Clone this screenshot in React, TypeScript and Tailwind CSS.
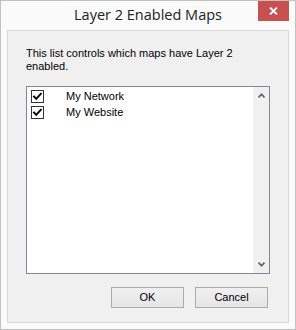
import React from "react";

function Check() {
  return (
    <div className="w-[13px] h-[13px] border border-[#333333] bg-white flex items-center justify-center shrink-0">
      <svg width="11" height="11" viewBox="0 0 11 11">
        <path d="M2 5.5 L4.2 7.8 L8.8 2.8" fill="none" stroke="#000" strokeWidth="1.9" strokeLinecap="square" />
      </svg>
    </div>
  );
}

function Row({ label }: { label: string }) {
  return (
    <div className="h-[16px] flex items-center pl-[4px]">
      <Check />
      <span className="ml-[22px] leading-[16px]">{label}</span>
    </div>
  );
}

export default function App() {
  return (
    <div
      className="w-[296px] h-[330px] border border-[#c2c2c2] bg-[#fafafa] flex flex-col text-[11px] text-black"
      style={{ fontFamily: '"Liberation Sans", Arial, sans-serif' }}
    >
      <div className="relative h-[29px] shrink-0 flex items-center justify-center">
        <span
          className="text-[14.5px] text-[#222] leading-none pb-[1px]"
          style={{ fontFamily: '"Open Sans", "Noto Sans", sans-serif' }}
        >
          Layer 2 Enabled Maps
        </span>
        <div className="absolute right-[6px] top-0 w-[31px] h-[20px] bg-[#c75050] flex items-center justify-center">
          <svg width="9" height="8" viewBox="0 0 9 8">
            <path d="M1 0.5 L8 7.5 M8 0.5 L1 7.5" stroke="#fff" strokeWidth="1.8" />
          </svg>
        </div>
      </div>
      <div className="flex-1 mx-[6px] mb-[6px] border border-[#d9d9d9] bg-[#f0f0f0] flex flex-col px-[18px] pt-[16px] pb-[13px]">
        <p className="leading-[13px]">
          This list controls which maps have Layer 2
          <br />
          enabled.
        </p>
        <div className="mt-[13px] h-[188px] border border-[#828790] bg-white flex">
          <div className="flex-1 pt-[1px]">
            <Row label="My Network" />
            <Row label="My Website" />
          </div>
          <div className="w-[16px] bg-[#f0f0f0] flex flex-col justify-between items-center py-[6px]">
            <svg width="7" height="5" viewBox="0 0 7 5">
              <path d="M0.5 4.5 L3.5 1.2 L6.5 4.5" fill="none" stroke="#606060" strokeWidth="1.6" />
            </svg>
            <svg width="7" height="5" viewBox="0 0 7 5">
              <path d="M0.5 0.5 L3.5 3.8 L6.5 0.5" fill="none" stroke="#606060" strokeWidth="1.6" />
            </svg>
          </div>
        </div>
        <div className="mt-[13px] flex justify-end gap-[11px] pr-[2px]">
          <button className="w-[73px] h-[21px] border border-[#acacac] bg-gradient-to-b from-[#f0f0f0] to-[#e5e5e5] leading-none">
            OK
          </button>
          <button className="w-[73px] h-[21px] border border-[#acacac] bg-gradient-to-b from-[#f0f0f0] to-[#e5e5e5] leading-none">
            Cancel
          </button>
        </div>
      </div>
    </div>
  );
}
